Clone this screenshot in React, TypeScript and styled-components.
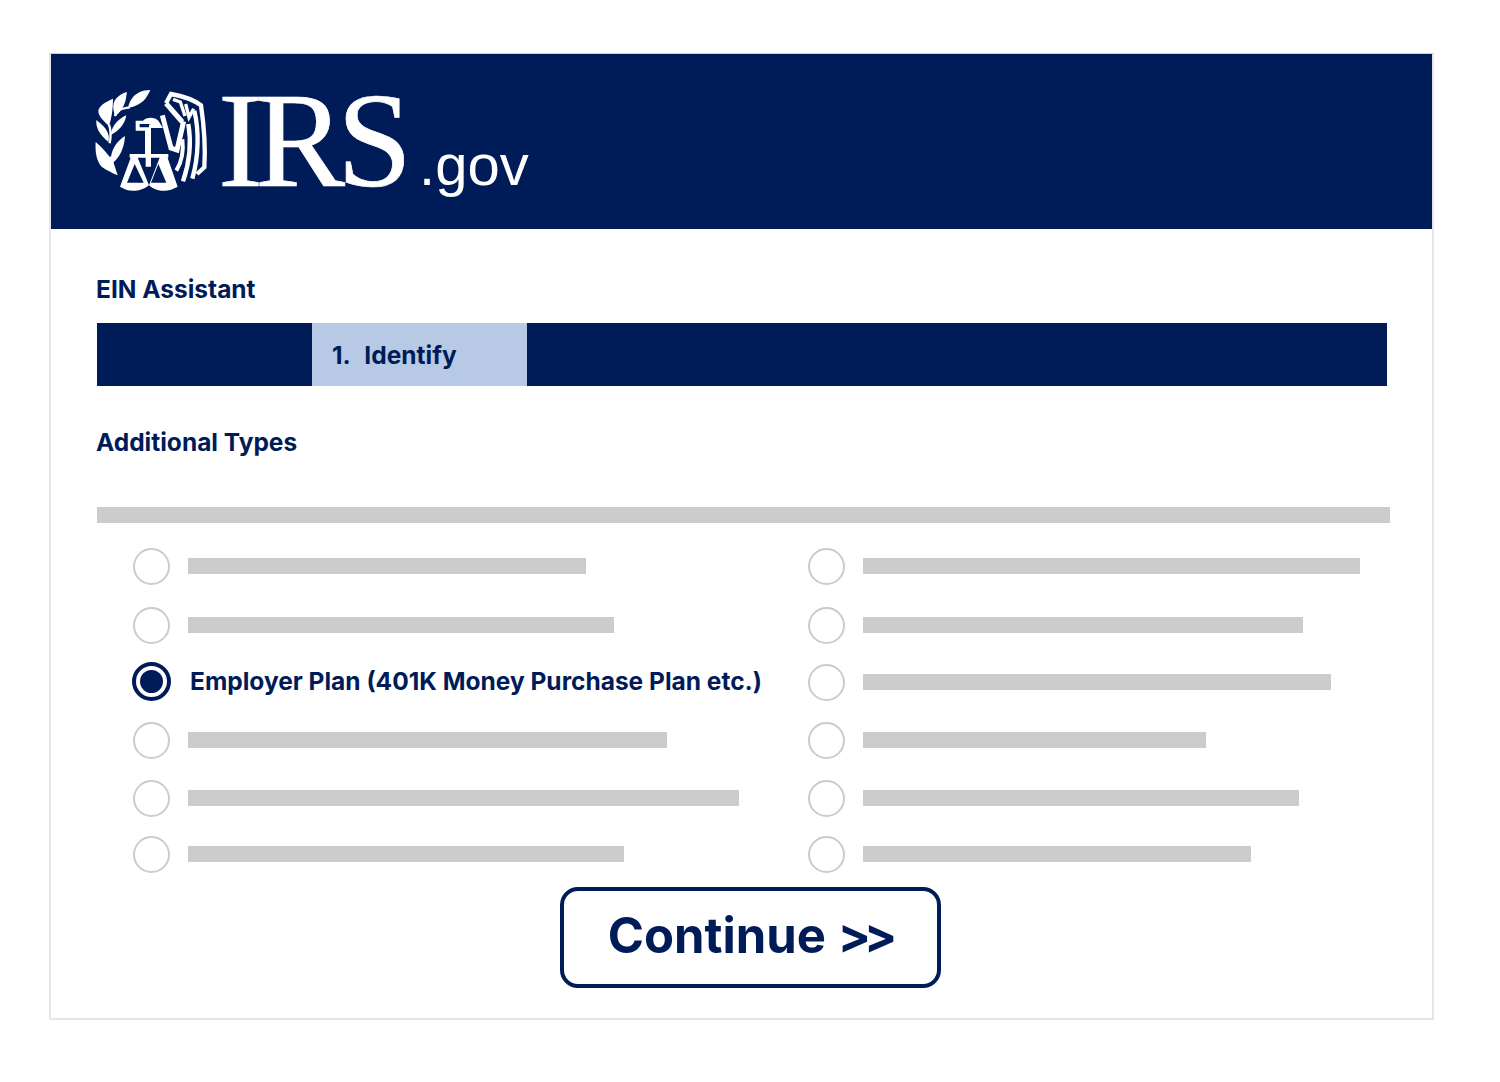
import React from 'react'
import styled, { createGlobalStyle } from 'styled-components'

const navy = '#001c58'
const sans = "Inter, 'Open Sans', sans-serif"

const GlobalStyle = createGlobalStyle`
  html, body { margin: 0; padding: 0; background: #fff; }
`

const leftBars = [398, 426, null, 479, 551, 436]
const rightBars = [497, 440, 468, 343, 436, 388]

function Seal() {
  return (
    <SealSvg viewBox="0 0 390 360" aria-hidden="true">
      <g fill="#fff">
        {/* laurel */}
        <path d="M190 30C165 30 146 40 136 54C130 62 126 70 123 84C148 80 168 68 178 52C183 44 186 38 190 30Z" />
        <path d="M120 36C100 42 84 54 80 70C77 82 80 96 84 110C100 96 112 78 116 60Z" />
        <path d="M78 56C54 66 36 78 34 92C33 106 48 122 66 138C74 114 78 86 78 56Z" />
        <path d="M28 120C26 144 38 164 64 186C70 164 60 144 28 120Z" />
        <path d="M118 106C92 118 76 136 70 166C94 154 114 134 118 106Z" />
        <path d="M26 186C24 214 28 244 44 260C58 270 74 278 92 286L78 244C62 222 46 202 26 186Z" />
        <path d="M114 168C90 184 76 204 72 230L76 250C98 232 112 204 114 168Z" />
        {/* eagle head and post */}
        <path
          fillRule="evenodd"
          d="M146 152V122H168C178 110 204 110 214 122L228 144H192V224H174V152ZM158 132V142H186V134L192 132Z"
        />
        {/* bar, drop */}
        <path d="M128 222H244V233H192V260H176V233H128Z" />
        {/* scales */}
        <path
          fillRule="evenodd"
          d="M133 228H150L186 316C170 328 155 333 143 332C128 334 112 328 99 320ZM143 252L120 308H170Z"
        />
        <path
          fillRule="evenodd"
          d="M240 228H220L186 316C200 328 214 333 226 332C240 334 258 328 272 320ZM214 252L192 308H238Z"
        />
      </g>
      <g fill="none" stroke="#fff" strokeLinejoin="miter" strokeLinecap="butt">
        <path d="M84 108C92 84 112 86 128 82" strokeWidth="7" />
        <path d="M66 134C72 150 72 170 68 190M70 230L82 270" strokeWidth="7" />
        {/* wing */}
        <path d="M237 70L252 42C285 48 318 58 342 76C350 130 356 200 352 262L330 282" strokeWidth="13" />
        <path d="M237 70L286 126" strokeWidth="15" />
        <path d="M226 106L252 204L270 210L290 124" strokeWidth="15" />
        <path d="M258 58L280 66L294 108M296 72L306 112L320 86" strokeWidth="10" />
        <path d="M322 92C336 150 336 226 316 296" strokeWidth="13" />
        <path d="M304 132C314 190 308 246 288 304" strokeWidth="13" />
        <path d="M286 178C290 210 284 246 268 272" strokeWidth="12" />
      </g>
    </SealSvg>
  )
}

function Option({ width }: { width: number }) {
  return (
    <OptionRow>
      <Radio />
      <TextBar style={{ width }} />
    </OptionRow>
  )
}

export default function App() {
  return (
    <Page>
      <GlobalStyle />
      <Card>
        <Header>
          <Seal />
          <Wordmark>IRS</Wordmark>
          <Domain>.gov</Domain>
        </Header>
        <Content>
          <Heading>EIN Assistant</Heading>
          <Steps>
            <Step />
            <Step $active>1.&nbsp; Identify</Step>
          </Steps>
          <SubHeading>Additional Types</SubHeading>
          <Divider />
          <Options>
            {leftBars.map((w, i) =>
              w === null ? (
                <SelectedRow key={i}>
                  <RadioSelected />
                  <SelectedLabel>Employer Plan (401K Money Purchase Plan etc.)</SelectedLabel>
                </SelectedRow>
              ) : (
                <Option key={i} width={w} />
              )
            )}
            {rightBars.map((w, i) => (
              <Option key={i} width={w} />
            ))}
          </Options>
          <Actions>
            <ContinueButton>
              Continue <Chevrons>&gt;&gt;</Chevrons>
            </ContinueButton>
          </Actions>
        </Content>
      </Card>
    </Page>
  )
}

const Page = styled.div`
  width: 1500px;
  height: 1082px;
  padding: 53px 0 0 49px;
  box-sizing: border-box;
  overflow: hidden;
  background: #fff;
`
const Card = styled.div`
  width: 1385px;
  height: 967px;
  box-sizing: border-box;
  border: 2px solid #e6e6e6;
  border-top: 1px solid #cfcfcf;
`
const Header = styled.header`
  height: 175px;
  background: ${navy};
  display: flex;
  align-items: flex-start;
  padding-left: 44px;
  box-sizing: border-box;
`
const SealSvg = styled.svg`
  width: 130px;
  height: 120px;
  margin: 26px 0 0 -8px;
  flex-shrink: 0;
`
const Wordmark = styled.span`
  font-family: 'Liberation Serif', serif;
  font-size: 135px;
  line-height: 135px;
  letter-spacing: -8px;
  color: #fff;
  -webkit-text-stroke: 0.7px #fff;
  margin: 19px 0 0 1px;
`
const Domain = styled.span`
  font-family: 'Liberation Sans', sans-serif;
  font-size: 58px;
  line-height: 60px;
  color: #fff;
  margin: 81px 0 0 15px;
`
const Content = styled.main`
  padding: 45px 0 0 45px;
`
const Heading = styled.h2`
  margin: 0;
  font-family: ${sans};
  font-weight: 700;
  font-size: 24.5px;
  line-height: 30px;
  color: ${navy};
`
const Steps = styled.div`
  width: 1290px;
  height: 63px;
  margin: 19px 0 0 1px;
  background: ${navy};
  display: flex;
`
const Step = styled.div<{ $active?: boolean }>`
  width: 215px;
  box-sizing: border-box;
  padding-left: 20px;
  display: flex;
  align-items: center;
  background: ${(p) => (p.$active ? '#b8c9e5' : 'transparent')};
  font-family: ${sans};
  font-weight: 700;
  font-size: 24.5px;
  word-spacing: 1px;
  color: ${navy};
`
const SubHeading = styled(Heading)`
  margin-top: 41px;
`
const Divider = styled.div`
  width: 1293px;
  height: 16px;
  margin: 50px 0 0 1px;
  background: #ccc;
`
const Options = styled.div`
  display: grid;
  grid-auto-flow: column;
  grid-template-columns: 675px 1fr;
  grid-template-rows: 59px 57px 58px 58px 56px 38px;
  margin: 24px 0 0 37px;
`
const OptionRow = styled.div`
  height: 38px;
  display: flex;
  align-items: center;
`
const SelectedRow = styled(OptionRow)`
  margin-top: -1px;
`
const Radio = styled.span`
  width: 37px;
  height: 37px;
  box-sizing: border-box;
  flex-shrink: 0;
  border: 2px solid #ccc;
  border-radius: 50%;
  margin-right: 18px;
`
const RadioSelected = styled.span`
  width: 39px;
  height: 39px;
  box-sizing: border-box;
  flex-shrink: 0;
  margin: 0 19px 0 -1px;
  border: 4px solid ${navy};
  border-radius: 50%;
  display: flex;
  align-items: center;
  justify-content: center;
  &::after {
    content: '';
    width: 23px;
    height: 23px;
    border-radius: 50%;
    background: ${navy};
  }
`
const TextBar = styled.span`
  height: 16px;
  background: #ccc;
`
const SelectedLabel = styled.span`
  font-family: ${sans};
  font-weight: 700;
  font-size: 24.5px;
  color: ${navy};
  white-space: nowrap;
`
const Actions = styled.div`
  display: flex;
  margin: 14px 0 0 464px;
`
const ContinueButton = styled.button`
  width: 381px;
  height: 101px;
  box-sizing: border-box;
  background: #fff;
  border: 4px solid ${navy};
  border-radius: 18px;
  font-family: ${sans};
  font-weight: 700;
  font-size: 49px;
  color: ${navy};
  padding: 0 3px 5px 0;
`
const Chevrons = styled.span`
  letter-spacing: -7px;
`
